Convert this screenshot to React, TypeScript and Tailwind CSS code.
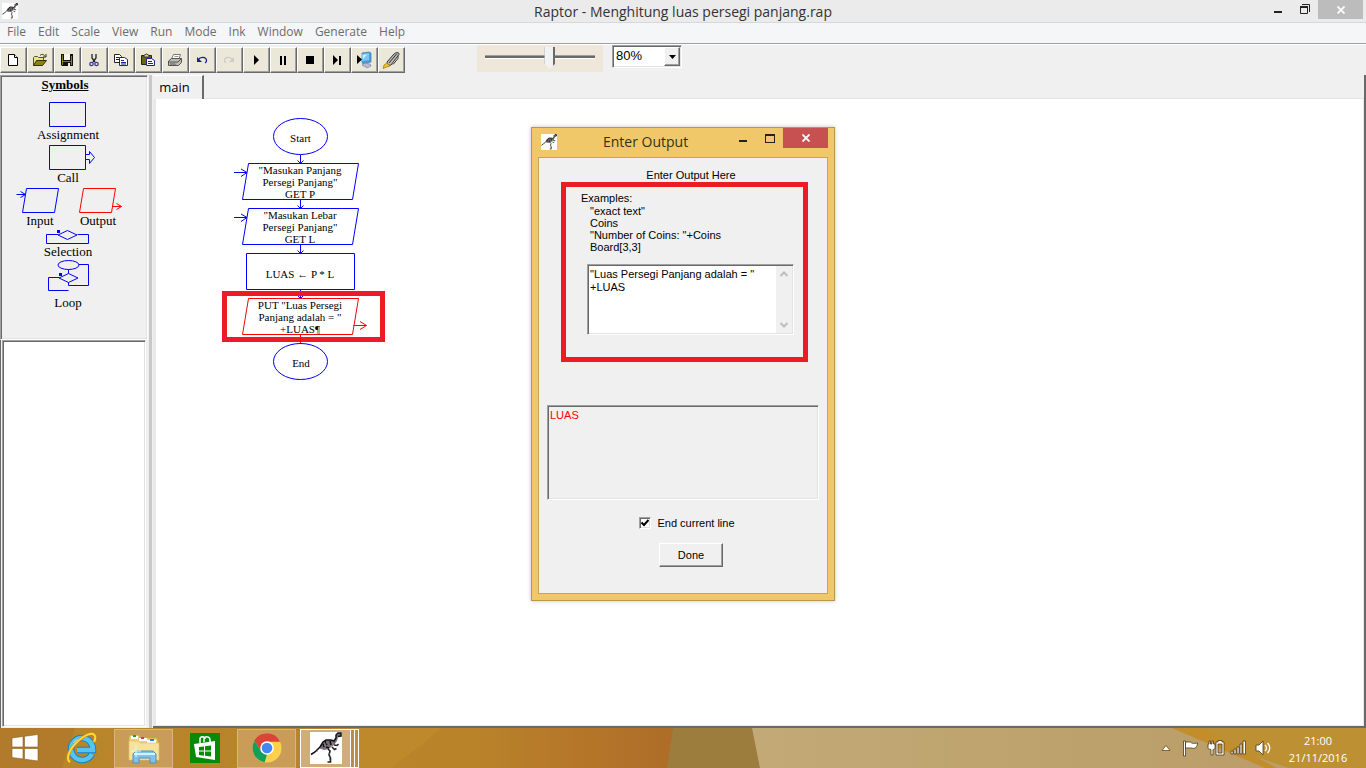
import { useState, type ReactNode } from "react";
import clsx from "clsx";

const SEGOE = "font-['Open_Sans',sans-serif]";
const ARIAL = "font-['Liberation_Sans',sans-serif]";
const TIMES = "font-['Liberation_Serif',serif]";

const menus = ["File", "Edit", "Scale", "View", "Run", "Mode", "Ink", "Window", "Generate", "Help"];

// classic 3D borders
const sunken =
  "border border-t-[#a0a0a0] border-l-[#a0a0a0] border-r-white border-b-white shadow-[inset_1px_1px_0_#696969,inset_-1px_-1px_0_#e3e3e3]";
const raised =
  "border border-t-white border-l-white border-r-[#696969] border-b-[#696969] shadow-[inset_-1px_-1px_0_#a0a0a0]";

function Raptor({ size }: { size: number }) {
  return (
    <svg width={size} height={size} viewBox="0 0 32 32" className="shrink-0 bg-white">
      <path d="M1 22.500L5 20l4-4 4-6 3-2h5l3 1 2-3V3l2-2h3v3l-3 1-1 4-3 4-3 2-2 2-5 1-5-2-3 3-5 3z" fill="#77717a" />
      <path d="M1 22.500L5 20l5-5 3-5 3-2h5l3 1 2-3V3l2-2h3v3l-3 .5" fill="none" stroke="#111" strokeWidth="1.500" />
      <path d="M18 17l2 2-1 4 1.500 3v4h-3M24 13l3 .5 1.500-1.500M22 15l2.500 2.500 2-1" fill="none" stroke="#222" strokeWidth="1.600" />
      <path d="M15 9l2 4M20 9l1 4M13 12l1 3M16 15l3 1" stroke="#111" strokeWidth="1.500" fill="none" />
      <path d="M10 16h1M18 10h1M24 11h1M18 14h1M19 22h1M19 27h1M27 3h1" stroke="#b030b0" strokeWidth="1.200" />
      <path d="M14 13h1M22 12h1M16 11h1M20 24h1M7 19h1" stroke="#66a04a" strokeWidth="1.200" />
    </svg>
  );
}

const tools: { name: string; icon: ReactNode }[] = [
  {
    name: "New",
    icon: (
      <g fill="#fff" stroke="#000">
        <path d="M3.500 2.500h6l3 3v8h-9z" />
        <path d="M9.500 2.500v3h3" />
      </g>
    ),
  },
  {
    name: "Open",
    icon: (
      <>
        <path d="M1.500 13.500v-8l1-1h3l1 1h5v3" fill="#e8e48c" stroke="#55551a" />
        <path d="M1.500 13.500l3-5h10l-4 5z" fill="#8a8418" stroke="#333300" />
        <path d="M8 3.500c2-2 4-1 5 1M14 2v3h-3" fill="none" stroke="#333300" />
      </>
    ),
  },
  {
    name: "Save",
    icon: (
      <>
        <path d="M2 2h12v12H3l-1-1z" fill="#111" />
        <path d="M3 3h1v10H3zM12 4h1v9h-1zM3 9h10v1H3z" fill="#808018" />
        <path d="M5 2h6v6H5z" fill="#f4f4f0" />
        <path d="M9 11h2v3H9z" fill="#eee" />
      </>
    ),
  },
  {
    name: "Cut",
    icon: (
      <>
        <path d="M6 2v4l3 4M10 2v4l-3 4" fill="none" stroke="#222" strokeWidth="1.300" />
        <circle cx="5.500" cy="12" r="1.700" fill="none" stroke="#3a3a9a" strokeWidth="1.300" />
        <circle cx="10.500" cy="12" r="1.700" fill="none" stroke="#3a3a9a" strokeWidth="1.300" />
      </>
    ),
  },
  {
    name: "Copy",
    icon: (
      <>
        <path d="M1.500 2.500h5l2 2v6h-7z" fill="#fff" stroke="#222" />
        <path d="M3 5.500h3M3 7.500h4" stroke="#222" />
        <path d="M6.500 5.500h5l3 2v6h-8z" fill="#fff" stroke="#20208a" />
        <path d="M8 8.500h3M8 10.500h5M8 12h5" stroke="#20208a" />
      </>
    ),
  },
  {
    name: "Paste",
    icon: (
      <>
        <path d="M1.500 3.500h10v9h-10z" fill="#66651c" stroke="#222" />
        <path d="M4 5V3h1l1-1h1l1 1h1v2z" fill="#ded98a" stroke="#222" strokeWidth=".8" />
        <path d="M6.500 6.500h5l3 2v5h-8z" fill="#fff" stroke="#20208a" />
        <path d="M8 9.500h4M8 11.500h5" stroke="#20208a" />
      </>
    ),
  },
  {
    name: "Print",
    icon: (
      <>
        <path d="M4.500 7l2-4.500h7L12 7z" fill="#fff" stroke="#777" />
        <path d="M7.500 4.500h4" stroke="#999" />
        <path d="M1.500 9l3-2.500h10v4l-3 3h-10z" fill="#bcbcb6" stroke="#555" />
        <path d="M2 10h9l3-3M3 12h6" fill="none" stroke="#555" />
        <path d="M8 11.500h2" stroke="#c8b52a" />
      </>
    ),
  },
  {
    name: "Undo",
    icon: (
      <>
        <path d="M4 8c2.500-4 8-3 8.500 0 .2 1.500-.5 2.500-1.500 3" fill="none" stroke="#1c1c90" strokeWidth="1.300" />
        <path d="M3 5v5h5z" fill="#1c1c90" />
      </>
    ),
  },
  {
    name: "Redo",
    icon: (
      <>
        <path d="M12 8c-2.500-4-8-3-8.500 0-.2 1.500.5 2.500 1.500 3" fill="none" stroke="#cfccbf" strokeWidth="1.300" />
        <path d="M13 5v5H8z" fill="#cfccbf" />
      </>
    ),
  },
  { name: "Play", icon: <path d="M6 3v10l5-5z" /> },
  { name: "Pause", icon: <path d="M5 4h2v9H5zM9 4h2v9H9z" /> },
  { name: "Stop", icon: <path d="M4 4h8v8H4z" /> },
  { name: "Step", icon: <path d="M4 3v10l5-5zM10 4h2v9h-2z" /> },
  {
    name: "Execute on server",
    icon: (
      <>
        <path d="M6 1l7-1 2 1v9l-8 2-1-2z" fill="#4a9ee0" stroke="#3d78b0" strokeWidth=".7" />
        <path d="M6 2l7-1v7l-7 1z" fill="#7cc6f5" />
        <path d="M7 3l4-.5L7 7z" fill="#d3f0ff" />
        <path d="M6 13l3-2 5 1 1 2-4 2z" fill="#b8bad2" stroke="#7779a0" strokeWidth=".6" />
        <path d="M1 3v9l5-4.500z" />
      </>
    ),
  },
  {
    name: "Ink pen",
    icon: (
      <>
        <path d="M4 10l7-8c2-2 5-2 5 0 0 1-1 2-2 3l-6 8c-2 1-4-1-4-3z" fill="#b8b8b8" stroke="#333" />
        <path d="M14 1.500L6 11M15 3.500v3l-5 6" stroke="#333" fill="none" />
        <path d="M4 11l3 3-3 1-4 1.500L1 13z" fill="#f0c020" stroke="#8a6a10" strokeWidth=".6" />
      </>
    ),
  },
];

function Toolbar() {
  const [speed, setSpeed] = useState(60);
  return (
    <div className="flex h-[30px] shrink-0 items-start">
      <div className="flex pt-[2px]">
        {tools.map((t) => (
          <button
            key={t.name}
            title={t.name}
            aria-label={t.name}
            className={clsx(raised, "flex h-[26px] w-[27px] items-center justify-center bg-[#ebe7d9] pr-px")}
          >
            <svg width="16" height="16" viewBox="0 0 16 16" className="overflow-visible">
              {t.icon}
            </svg>
          </button>
        ))}
      </div>
      <div className="ml-[72px] flex h-[27px] w-[126px] justify-center bg-[#eee7da]">
        <input
          type="range"
          aria-label="Speed"
          value={speed}
          onChange={(e) => setSpeed(Number(e.target.value))}
          className="h-[24px] w-[110px] appearance-none bg-transparent [&::-webkit-slider-runnable-track]:h-[4px] [&::-webkit-slider-runnable-track]:border-t [&::-webkit-slider-runnable-track]:border-b [&::-webkit-slider-runnable-track]:border-t-[#a0a0a0] [&::-webkit-slider-runnable-track]:border-b-white [&::-webkit-slider-runnable-track]:bg-[#696969] [&::-webkit-slider-thumb]:-mt-[9px] [&::-webkit-slider-thumb]:h-[22px] [&::-webkit-slider-thumb]:w-[11px] [&::-webkit-slider-thumb]:appearance-none [&::-webkit-slider-thumb]:bg-[linear-gradient(90deg,#c4c4c4_1px,#f4f4f4_1px,#f0f0f0_9px,#696969_9px)] [&::-webkit-slider-thumb]:[clip-path:polygon(0_0,100%_0,100%_75%,50%_100%,0_75%)]"
        />
      </div>
      <div className={clsx(sunken, "relative ml-[9px] h-[23px] w-[70px] bg-white")}>
        <select aria-label="Zoom" className={clsx(ARIAL, "block h-full w-full appearance-none bg-transparent pb-[2px] pl-[3px] text-[13px] leading-4 text-black")}>
          <option>80%</option>
          <option>100%</option>
        </select>
        <span className={clsx(raised, "pointer-events-none absolute top-[1px] right-[1px] flex h-[19px] w-[16px] items-center justify-center bg-[#f0f0f0]")}>
          <svg width="7" height="4" viewBox="0 0 7 4">
            <path d="M0 0h7L3.500 4z" />
          </svg>
        </span>
      </div>
    </div>
  );
}

function Shape({ label, width, height, color = "#0000ff", children }: { label: string; width: number; height: number; color?: string; children: ReactNode }) {
  return (
    <div className="flex flex-col items-center">
      <svg width={width} height={height} viewBox={`0 0 ${width} ${height}`} fill="none" stroke={color} className="overflow-visible">
        {children}
      </svg>
      <span>{label}</span>
    </div>
  );
}

function SymbolsPanel() {
  return (
    <div className={clsx(sunken, TIMES, "flex h-[265px] shrink-0 flex-col items-center gap-px pr-[12px] pt-px text-[13px] leading-4 text-black")}>
      <h2 className="mb-[7px] pr-[6px] font-bold underline">Symbols</h2>
      <Shape label="Assignment" width={38} height={26}>
        <path d="M.5 1.500h36v24H.5z" />
      </Shape>
      <Shape label="Call" width={38} height={26}>
        <path d="M.5 1.500h36v24H.5zM36.500 10.500h4v-3l5 6-5 6v-4h-4" />
      </Shape>
      <div className="flex w-[134px] justify-between pr-[18px] pl-[21px]">
        <Shape label="Input" width={36} height={26}>
          <path d="M4.500 1.500h32l-4 24H.5zM-5.500 7.500h9M-1.500 4.500l5 3-5 3" />
        </Shape>
        <Shape label="Output" width={38} height={26} color="#ff0000">
          <path d="M4.500 1.500h32l-4 24H.5zM33.500 19.500h9M37.500 16.500l5 3-5 3" />
        </Shape>
      </div>
      <Shape label="Selection" width={43} height={14}>
        <path d="M12 4.500H.5v9h42v-9h-11M12 5l9.500-4.500L31 5l-9.500 4.500z" />
        <path d="M11 0h3v3h-3z" fill="#0000ff" stroke="none" />
      </Shape>
      <Shape label="Loop" width={41} height={34}>
        <ellipse cx="20.500" cy="4" rx="10.500" ry="4.500" />
        <path d="M31 3.500h9.500v21h-20v-3M20.500 8.500v4M11 16.500H.5v13h20M11 17l9.500-4.500L30 17l-9.500 4.500z" />
        <path d="M11 12h3v3h-3z" fill="#0000ff" stroke="none" />
      </Shape>
    </div>
  );
}

function Flowchart() {
  return (
    <svg
      width="170"
      height="280"
      viewBox="220 110 170 280"
      fill="none"
      stroke="#0000ff"
      textAnchor="middle"
      className={clsx(TIMES, "text-[11px] [&_text]:fill-black [&_text]:stroke-none")}
    >
      <ellipse cx="300.500" cy="136.500" rx="27" ry="18" />
      <text x="300.500" y="142">Start</text>
      <path d="M300.500 155v8M297.500 160.500l3 3 3-3" />

      <path d="M248.500 163.500h110l-6 36h-110zM234 172.500h12.500M241 169l6 3.500-6 4" />
      <text x="300" y="174">"Masukan Panjang</text>
      <text x="300" y="186">Persegi Panjang"</text>
      <text x="300" y="198">GET P</text>
      <path d="M300.500 199v9M297.500 205.500l3 3 3-3" />

      <path d="M248.500 208.500h110l-6 36h-110zM234 217.500h12.500M241 214l6 3.500-6 4" />
      <text x="300" y="219">"Masukan Lebar</text>
      <text x="300" y="231">Persegi Panjang"</text>
      <text x="300" y="243">GET L</text>
      <path d="M300.500 244v9M297.500 250.500l3 3 3-3" />

      <path d="M246.500 253.500h108v36h-108z" />
      <text x="300" y="278">LUAS ← P * L</text>
      <path d="M300.500 290v8M297.500 295.500l3 3 3-3" />

      {/* selected statement */}
      <path d="M224.500 293.500h158v46h-158z" stroke="#ed1c24" strokeWidth="5" />
      <path d="M248.500 298.500h110l-6 36h-110zM353.500 325.500h13M360 321.500l6.500 4-6.500 4M300.500 335v9" stroke="#ff0000" />
      <text x="300" y="309">PUT "Luas Persegi</text>
      <text x="300" y="321">Panjang adalah = "</text>
      <text x="300" y="333">+LUAS¶</text>

      <ellipse cx="300.500" cy="361.500" rx="27" ry="18" />
      <text x="301" y="367">End</text>
    </svg>
  );
}

function OutputDialog() {
  const [text, setText] = useState('"Luas Persegi Panjang adalah = "\n+LUAS');
  const [endLine, setEndLine] = useState(true);
  return (
    <div role="dialog" aria-label="Enter Output" className="absolute top-[127px] left-[531px] flex h-[474px] w-[304px] flex-col border border-[#b8974a] bg-[#f0c869] px-[6px] pb-[6px] shadow-[0_0_4px_rgba(0,0,0,0.25)]">
      <div className="flex h-[29px] shrink-0 items-start">
        <div className="mt-[6px] ml-[3px]">
          <Raptor size={16} />
        </div>
        <h2 className={clsx(SEGOE, "ml-[46px] flex-1 pt-[4px] text-[14px] leading-5 text-[#33301f]")}>Enter Output</h2>
        <button aria-label="Minimize" className="flex h-[20px] w-[27px] justify-center pt-[12px]">
          <span className="h-[2px] w-[8px] bg-[#222]" />
        </button>
        <button aria-label="Maximize" className="flex h-[20px] w-[27px] justify-center pt-[6px]">
          <span className="h-[9px] w-[10px] border border-t-2 border-[#222]" />
        </button>
        <button aria-label="Close" className="flex h-[20px] w-[45px] items-center justify-center bg-[#c75050]">
          <svg width="8" height="8" viewBox="0 0 8 8" stroke="#fff" strokeWidth="1.800">
            <path d="M.5.5l7 7M7.500.5l-7 7" />
          </svg>
        </button>
      </div>

      <div className={clsx(ARIAL, "flex flex-1 flex-col border border-[#c9a458] bg-[#f0f0f0] pt-[10px] text-[11px] leading-[14px] text-black")}>
        <label htmlFor="expression" className="pl-4 text-center">Enter Output Here</label>
        <div className="ml-[22px] flex h-[180px] w-[247px] shrink-0 flex-col border-5 border-[#ed1c24] pt-[5px]">
          <div className="pl-[15px] leading-[12px]">
            <p className="mb-px">Examples:</p>
            <ul className="pl-[9px]">
              <li>"exact text"</li>
              <li>Coins</li>
              <li>"Number of Coins: "+Coins</li>
              <li>Board[3,3]</li>
            </ul>
          </div>
          <div className={clsx(sunken, "mt-[11px] ml-[21px] flex h-[71px] w-[207px] bg-white p-px")}>
            <textarea
              id="expression"
              value={text}
              onChange={(e) => setText(e.target.value)}
              className="min-w-0 flex-1 resize-none overflow-hidden pt-[2px] pl-px leading-[13px] outline-none"
            />
            <div className="flex w-[16px] flex-col items-center justify-between bg-[#f0f0f0] py-[5px]">
              <button aria-label="Scroll up">
                <svg width="8" height="6" viewBox="0 0 8 6" fill="none" stroke="#bfbfbf" strokeWidth="2">
                  <path d="M.5 5L4 1.500 7.500 5" />
                </svg>
              </button>
              <button aria-label="Scroll down">
                <svg width="8" height="6" viewBox="0 0 8 6" fill="none" stroke="#bfbfbf" strokeWidth="2">
                  <path d="M.5 1L4 4.500 7.500 1" />
                </svg>
              </button>
            </div>
          </div>
        </div>

        <div className={clsx(sunken, "mx-[8px] mt-[43px] h-[95px] pt-[2px] pl-[2px] text-[#ff0000]")}>LUAS</div>

        <label className="mt-[16px] flex items-center justify-center gap-[6px] pl-[8px]">
          <input
            type="checkbox"
            checked={endLine}
            onChange={(e) => setEndLine(e.target.checked)}
            className={clsx(sunken, "peer h-[12px] w-[12px] appearance-none bg-white")}
          />
          <svg width="8" height="8" viewBox="0 0 8 8" className="pointer-events-none -ml-[16px] mr-[2px] hidden peer-checked:block">
            <path d="M.5 3.500L3 6l4.500-5" fill="none" stroke="#000" strokeWidth="2" />
          </svg>
          End current line
        </label>
        <div className="mt-[13px] pl-4 text-center">
          <button className={clsx(raised, "h-[24px] w-[64px]")}>Done</button>
        </div>
      </div>
    </div>
  );
}

function TaskButton({ name, children }: { name: string; children: ReactNode }) {
  return (
    <button aria-label={name} className="flex h-[39px] w-[59px] items-center justify-center border border-[#d6b781] bg-[#c99c58]">
      {children}
    </button>
  );
}

function Taskbar() {
  return (
    <footer className="relative flex h-[40px] shrink-0 items-center bg-[#b8842a] text-white">
      {/* wallpaper tinting through the bar */}
      <svg className="absolute inset-0 h-full w-full" viewBox="0 0 1366 40" preserveAspectRatio="none">
        <defs>
          <linearGradient id="amber" x1="0" x2="1">
            <stop offset="0" stopColor="#b8862a" />
            <stop offset=".7" stopColor="#b9832a" />
            <stop offset=".85" stopColor="#b57629" />
            <stop offset="1" stopColor="#ae6c28" />
          </linearGradient>
          <linearGradient id="sand" x1="0" x2="1">
            <stop offset="0" stopColor="#c2a975" />
            <stop offset="1" stopColor="#b99b67" />
          </linearGradient>
        </defs>
        <path d="M0 0h680v40H0z" fill="url(#amber)" />
        <path d="M0 0h75L62 40H0z" fill="#b27b2c" />
        <path d="M330 0h112l-50 40h-62z" fill="#bd892a" />
        <path d="M673 0h80l7 40h-93z" fill="#9c7d3d" />
        <path d="M752 0h614v40H760z" fill="url(#sand)" />
        <path d="M1172 0h194v40h-77z" fill="#bd9034" />
        <path d="M1172 0h30l75 40h-12z" fill="#c28d2b" />
      </svg>
      <div className="relative flex flex-1 items-center">
        <button aria-label="Start" className="ml-[11px]">
          <svg width="28" height="28" viewBox="0 0 28 28" fill="#fff" stroke="#8a5c1c" strokeWidth=".6">
            <path d="M1 4l11-1.500V13H1zM13.500 2.300L27 .5V13H13.500zM1 14.500h11V25L1 23.500zM13.500 14.500H27V27l-13.500-1.800z" />
          </svg>
        </button>
        <button aria-label="Internet Explorer" className="ml-[26px]">
          <svg width="32" height="32" viewBox="0 0 32 32" fill="none">
            <path d="M27 22c-2 4-6 6-10 6-6 0-11-5-11-11S11 6 17 6s11 5 11 12H12" stroke="#1e7fc0" strokeWidth="6.500" />
            <path d="M27 22c-2 4-6 6-10 6-6 0-11-5-11-11S11 6 17 6s11 5 11 12H12" stroke="#55c5ef" strokeWidth="4.500" />
            <path d="M9 11c2-3 5-4 8-4" stroke="#b6ebff" strokeWidth="1.500" />
            <path d="M5 30C1 28 3 19 11 11S28-1 30 4c.6 1.600 0 4-1 6" stroke="#c88b10" strokeWidth="3" />
            <path d="M5 30C1 28 3 19 11 11S28-1 30 4c.6 1.600 0 4-1 6" stroke="#ffd83a" strokeWidth="2" />
          </svg>
        </button>
        <div className="ml-[17px]">
          <TaskButton name="File Explorer">
            <svg width="32" height="32" viewBox="0 0 32 32">
              <path d="M2 3h9l1 3h17l1 3v18H1V5z" fill="#ecd078" stroke="#c9a64c" />
              <path d="M3 4h7v3H3z" fill="#fff" />
              <path d="M5 3h3v2H5z" fill="#18a34a" />
              <path d="M11 6h8v3h-8z" fill="#fff" />
              <path d="M13 5h3v2h-3z" fill="#d6432c" />
              <path d="M19 8h9v3h-9z" fill="#fff" />
              <path d="M22 7h4v2h-4z" fill="#2487d3" />
              <path d="M1 9h10l1 2h19v17H1z" fill="#f6e29b" stroke="#dcc06c" strokeWidth=".6" />
              <path d="M5 31v-9l3-3h17l3 3v9h-6v-5H11v5z" fill="#82c2e6" stroke="#4e91bf" />
              <path d="M6 22h21" stroke="#d6f1ff" strokeWidth="2" />
              <path d="M8 13v12M3 19h10" stroke="#dff5ff" />
            </svg>
          </TaskButton>
        </div>
        <button aria-label="Store" className="ml-[17px] flex h-[30px] w-[30px] items-center justify-center bg-[#078a07]">
          <svg width="24" height="26" viewBox="0 0 24 26">
            <path d="M7 8V4c0-3 5-3 5 0M11 7V4c0-3 6-3 6 1v2" fill="none" stroke="#fff" strokeWidth="1.500" />
            <path d="M1 9l21-3v19L3 22z" fill="#fff" />
            <path d="M6 12l5-.6v4.100H6zM12 11.200l6-.7v5h-6zM6 16.500h5v4.200L6 20zM12 16.500h6v5l-6-.8z" fill="#078a07" />
          </svg>
        </button>
        <div className="ml-[17px]">
          <TaskButton name="Google Chrome">
            <svg width="30" height="30" viewBox="0 0 30 30">
              <circle cx="15" cy="15" r="14.500" fill="#fdd24a" />
              <path d="M15 15L2.400 7.800A14.500 14.500 0 0 1 27.900 8.400H15z" fill="#db4437" />
              <path d="M15 8.400h12.900A14.500 14.500 0 0 0 2.400 7.800L9.300 18.300z" fill="#db4437" />
              <path d="M2.400 7.800l6.900 10.500L15 21.600l-2.300 7.700A14.500 14.500 0 0 1 2.400 7.800z" fill="#14a05a" />
              <circle cx="15" cy="15" r="6.800" fill="#fff" />
              <circle cx="15" cy="15" r="5.300" fill="#4285f4" />
            </svg>
          </TaskButton>
        </div>
        <button aria-label="Raptor" className="ml-[4px] flex h-[39px] w-[59px]">
          <span className="flex h-full w-[51px] items-center justify-center border border-white bg-[#d0ae7c]">
            <Raptor size={32} />
          </span>
          <span className="h-full w-[4px] border-y border-r border-white bg-[#b98e4c]" />
          <span className="h-full w-[4px] border-y border-r border-white bg-[#b98e4c]" />
        </button>
      </div>
      <div className="relative flex items-center">
        <button aria-label="Show hidden icons">
          <svg width="10" height="8" viewBox="0 0 10 8">
            <path d="M1 6.500l4-5 4 5z" fill="#fff" stroke="#6b4d17" strokeWidth=".8" />
          </svg>
        </button>
        <svg width="88" height="18" viewBox="0 0 88 18" className="ml-[11px] overflow-visible" fill="#fff" stroke="#4f3b12" strokeWidth=".8">
          <path d="M1.500 2h2v15h-2zM3.500 3h5c1 1 2 2 7 1v1c-1 4-3 5-6 4h-6z" />
          <path d="M27 2h1.500v3H30V2h1.500v3H33v4c0 1-1 1-2 1.500V16h-2v-5.500C27 10 26 10 26 9V5h1z" />
          <path d="M34 3h2V1.500h4V3h2v13h-8zM36 5v9h4V5z" fillRule="evenodd" />
          <path d="M49 12h2v3h-2zM52 10h2v5h-2zM55 8h2v7h-2zM58 5h2v10h-2zM61 2h2.500v13H61z" />
          <path d="M74 6h3l4-4v14l-4-4h-3z" />
          <path d="M83 6c2 1.500 2 4.500 0 6M85.500 4c3 3 3 7 0 10" fill="none" stroke="#fff" strokeWidth="1.300" />
        </svg>
        <div className={clsx(SEGOE, "flex w-[96px] flex-col items-center pt-[2px] text-[11px] leading-[17px]")}>
          <time>21:00</time>
          <span>21/11/2016</span>
        </div>
      </div>
    </footer>
  );
}

export default function App() {
  return (
    <div className="relative flex h-screen flex-col overflow-hidden bg-[#f0f0f0] text-black">
      <header className="flex h-[23px] shrink-0 items-start border-b border-[#d6d9dc] bg-[#ebebeb]">
        <div className="flex w-[108px] pt-[3px] pl-[2px]">
          <Raptor size={16} />
        </div>
        <h1 className={clsx(SEGOE, "flex-1 pt-px text-center text-[14px] leading-[21px] text-[#333]")}>
          Raptor - Menghitung luas persegi panjang.rap
        </h1>
        <div className="flex w-[108px] shrink-0 pl-[6px]">
          <button aria-label="Minimize" className="flex h-[19px] w-[27px] justify-center pt-[11px]">
            <span className="h-[2px] w-[8px] bg-[#222]" />
          </button>
          <button aria-label="Restore" className="flex h-[19px] w-[27px] justify-center pt-[4px]">
            <svg width="10" height="10" viewBox="0 0 10 10" fill="none" stroke="#222">
              <path d="M2 .5h7.500V8M.5 3.500h7v6h-7z" />
              <path d="M0 3h8" strokeWidth="2" />
            </svg>
          </button>
          <button aria-label="Close" className="flex h-[19px] w-[45px] items-center justify-center bg-[#bcbcbc]">
            <svg width="8" height="8" viewBox="0 0 8 8" stroke="#fff" strokeWidth="1.800">
              <path d="M.5.5l7 7M7.500.5l-7 7" />
            </svg>
          </button>
        </div>
      </header>

      <nav className={clsx(SEGOE, "flex h-[22px] shrink-0 items-start gap-[12px] border-b border-white bg-[#f5f6f7] pl-[7px] text-[12px] leading-[18px] text-[#6d6d6d] shadow-[inset_0_-1px_0_#a0a0a0]")}>
        {menus.map((m) => (
          <button key={m}>{m}</button>
        ))}
      </nav>

      <Toolbar />

      <main className="flex min-h-0 flex-1">
        <aside className="flex w-[148px] shrink-0 flex-col">
          <SymbolsPanel />
          <div className="min-h-0 flex-1 border-l border-[#696969] pr-[2px] pb-px pl-px">
            <div className={clsx(sunken, "h-full bg-white")} />
          </div>
        </aside>
        <div className="mx-px w-[3px] shrink-0 bg-[#c8c8c8]" />
        <section className="flex min-w-0 flex-1 flex-col border-r-2 border-b-2 border-[#696969]">
          <div className="flex h-[24px] shrink-0">
            <button className={clsx(SEGOE, "flex h-[24px] w-[51px] justify-center border-t border-r-2 border-t-white border-r-[#696969] pr-[6px] text-[13px] leading-[22px]")}>
              main
            </button>
            <span className="flex-1 border-b border-[#e3e3e3]" />
          </div>
          <div className="min-h-0 flex-1 border-r border-b border-l-3 border-[#e9e9e9] bg-white pt-[11px] pl-[64px]">
            <Flowchart />
          </div>
        </section>
      </main>

      <Taskbar />
      <OutputDialog />
    </div>
  );
}
